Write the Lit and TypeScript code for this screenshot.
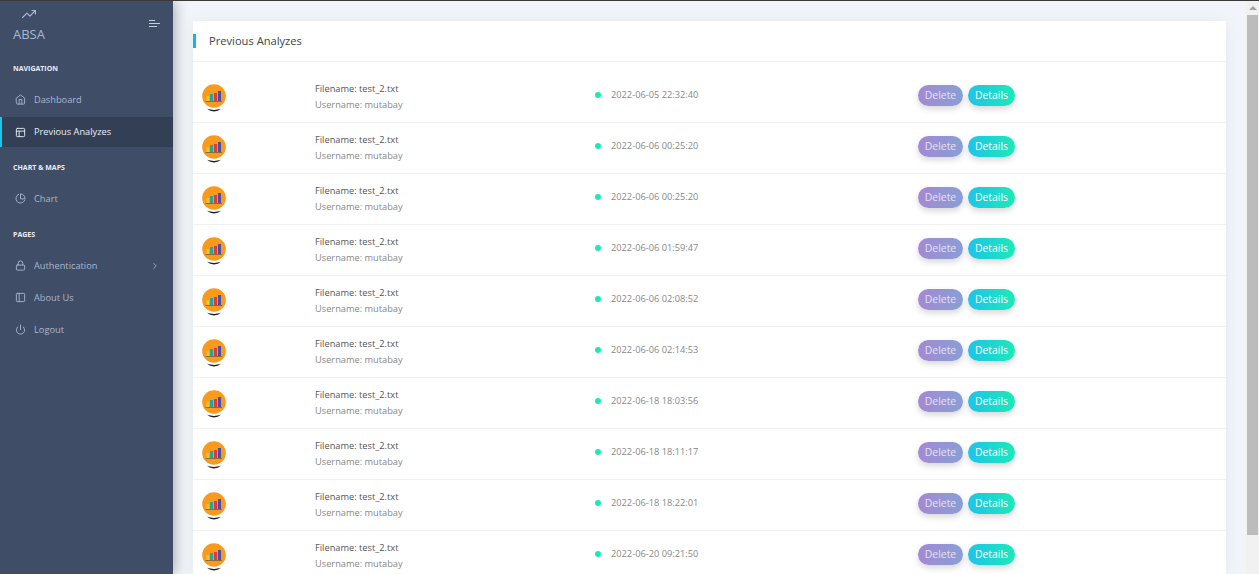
import { LitElement, html, css, svg } from 'lit';
import { customElement } from 'lit/decorators.js';

const icon = (body: unknown) => html`<svg class="ico" viewBox="0 0 24 24" fill="none" stroke="currentColor" stroke-width="2" stroke-linecap="round" stroke-linejoin="round">${body}</svg>`;

const icons = {
  home: svg`<path d="M3 9l9-7 9 7v11a2 2 0 0 1-2 2H5a2 2 0 0 1-2-2z"/><polyline points="9 22 9 12 15 12 15 22"/>`,
  layout: svg`<rect x="3" y="3" width="18" height="18" rx="2"/><line x1="3" y1="9" x2="21" y2="9"/><line x1="9" y1="21" x2="9" y2="9"/>`,
  pie: svg`<path d="M21.21 15.89A10 10 0 1 1 8 2.83"/><path d="M22 12A10 10 0 0 0 12 2v10z"/>`,
  lock: svg`<rect x="3" y="11" width="18" height="11" rx="2"/><path d="M7 11V7a5 5 0 0 1 10 0v4"/>`,
  sidebar: svg`<rect x="3" y="3" width="18" height="18" rx="2"/><line x1="9" y1="3" x2="9" y2="21"/>`,
  power: svg`<path d="M18.36 6.64a9 9 0 1 1-12.73 0"/><line x1="12" y1="2" x2="12" y2="12"/>`,
};

const dates = [
  '2022-06-05 22:32:40',
  '2022-06-06 00:25:20',
  '2022-06-06 00:25:20',
  '2022-06-06 01:59:47',
  '2022-06-06 02:08:52',
  '2022-06-06 02:14:53',
  '2022-06-18 18:03:56',
  '2022-06-18 18:11:17',
  '2022-06-18 18:22:01',
  '2022-06-20 09:21:50',
];

@customElement('app-root')
export class AppRoot extends LitElement {
  static styles = css`
    :host {
      display: flex;
      flex-direction: column;
      height: 100vh;
      overflow: hidden;
      font-family: 'Open Sans', sans-serif;
      font-size: 9.25px;
      background: #f1f5f9;
      border-top: 1px solid #3a3a3a;
      box-sizing: border-box;
    }
    .shell {
      flex: 1;
      min-height: 0;
      display: flex;
    }

    /* sidebar */
    .side {
      width: 173px;
      flex: none;
      background: #3f4d67;
      color: #a9b7d0;
      box-shadow: 2px 0 12px rgba(30, 40, 60, 0.35);
      z-index: 1;
    }
    .brand {
      height: 51px;
      display: flex;
      justify-content: space-between;
      padding: 0 13px;
      box-sizing: border-box;
    }
    .logo {
      display: flex;
      flex-direction: column;
      font-size: 13px;
      line-height: 18px;
    }
    .logo svg {
      width: 14px;
      height: 14px;
      margin: 6px 0 4px 9px;
      color: #a9b7d0;
    }
    .toggle {
      display: flex;
      flex-direction: column;
      gap: 2px;
      margin: 19px 0 0;
      width: 11px;
    }
    .toggle i {
      display: block;
      height: 1px;
      background: #c3cde0;
    }
    .toggle i:nth-child(1) { width: 6px; }
    .toggle i:nth-child(2) { width: 11px; }
    .toggle i:nth-child(3) { width: 8px; }
    .label {
      padding: 12px 13px 0;
      height: 32px;
      box-sizing: border-box;
      font-size: 7px;
      line-height: 10px;
      font-weight: 700;
      color: #e8edf7;
      text-transform: uppercase;
    }
    .item {
      display: flex;
      align-items: center;
      height: 32px;
      padding: 0 0 1px 15px;
      box-sizing: border-box;
      line-height: 14px;
      position: relative;
    }
    .item.active {
      background: #333f54;
      color: #e8edf7;
      border-left: 2px solid #1dc4e9;
      padding-left: 13px;
      padding-bottom: 0;
      height: 30px;
      margin: 1px 0;
    }
    .item .ico {
      width: 11px;
      height: 11px;
      margin-right: 8px;
    }
    .item .chev {
      width: 10px;
      height: 10px;
      margin: 0;
      position: absolute;
      right: 13px;
    }
    .gap { height: 3px; }

    /* content */
    .main {
      flex: 1;
      min-width: 0;
      padding: 20px 20px 0;
    }
    .card {
      background: #fff;
      box-shadow: 0 1px 12px rgba(69, 90, 100, 0.08);
      height: 100%;
    }
    .head {
      height: 41px;
      box-sizing: border-box;
      border-bottom: 1px solid #f1f1f1;
      display: flex;
      align-items: center;
      padding: 0 0 2px 16px;
      position: relative;
      font-size: 11.15px;
      color: #37474f;
    }
    .head::before {
      content: '';
      position: absolute;
      left: 0;
      top: 13px;
      width: 3px;
      height: 14px;
      background: #12b5f0;
    }
    .rows { padding-top: 10px; }
    .row {
      display: grid;
      grid-template-columns: 113px 280px 323px auto;
      align-items: center;
      height: 51px;
      box-sizing: border-box;
      padding-left: 9px;
      border-bottom: 1px solid #f1f1f1;
    }
    .row:last-child { border-bottom-color: transparent; }
    .avatar {
      width: 24px;
      height: 30px;
      display: block;
      margin-top: 4px;
    }
    .who {
      line-height: 16px;
      color: #555;
    }
    .who div + div { color: #888; }
    .when {
      display: flex;
      align-items: center;
      color: #888;
      margin-top: -5px;
    }
    .dot {
      width: 6px;
      height: 6px;
      border-radius: 50%;
      background: #1de9b6;
      margin: 1px 10px 0 0;
    }
    .btns {
      display: flex;
      gap: 5px;
      margin-top: -4px;
    }
    .btn {
      height: 21px;
      border-radius: 11px;
      display: flex;
      align-items: center;
      justify-content: center;
      font-size: 10.4px;
      color: #fff;
      box-shadow: 0 3px 6px rgba(0, 0, 0, 0.16);
    }
    .btn.del {
      width: 45px;
      background: linear-gradient(to right, #a389d4, #899fd4);
      color: #e6e1f3;
    }
    .btn.det {
      width: 47px;
      background: linear-gradient(to right, #1dc4e9, #1de9b6);
    }

    /* scrollbar */
    .bar {
      width: 13px;
      flex: none;
      background: #f1f1f1;
      display: flex;
      flex-direction: column;
    }
    .bar .up {
      height: 14px;
      display: flex;
      align-items: center;
      justify-content: center;
    }
    .bar .up::before {
      content: '';
      border: 4px solid transparent;
      border-top: 0;
      border-bottom: 4px solid #a3a3a3;
    }
    .bar .thumb {
      height: 520px;
      margin: 0 1px;
      background: #bcbcbc;
    }
  `;

  private item(ic: unknown, text: string, active = false, more = false) {
    return html`<div class="item ${active ? 'active' : ''}">
      ${icon(ic)}<span>${text}</span>
      ${more ? html`<svg class="ico chev" viewBox="0 0 24 24" fill="none" stroke="currentColor" stroke-width="2" stroke-linecap="round" stroke-linejoin="round"><polyline points="9 18 15 12 9 6"/></svg>` : ''}
    </div>`;
  }

  private avatar() {
    return html`<svg class="avatar" viewBox="0 0 24 30">
      <circle cx="12" cy="12" r="11.8" fill="#f99a1c"/>
      <rect x="4.5" y="12" width="2.6" height="5" fill="#f9c22e"/>
      <rect x="8" y="10" width="3" height="7" fill="#26a69a"/>
      <rect x="12" y="9" width="3" height="8" fill="#e53935"/>
      <rect x="16" y="7" width="3" height="10" fill="#4a4fa3"/>
      <rect x="3.5" y="17" width="16.5" height="1" fill="#8a6d3b"/>
      <path d="M5 24.8 Q12 27 19 24.8 Q16 27.4 12 27.4 Q8 27.4 5 24.8Z" fill="#1f1f2b"/>
    </svg>`;
  }

  render() {
    return html`
      <div class="shell">
        <nav class="side">
          <div class="brand">
            <div class="logo">
              ${icon(svg`<polyline points="23 6 13.5 15.5 8.5 10.5 1 18"/><polyline points="17 6 23 6 23 12"/>`)}
              <span>ABSA</span>
            </div>
            <div class="toggle"><i></i><i></i><i></i></div>
          </div>
          <div class="label">Navigation</div>
          ${this.item(icons.home, 'Dashboard')}
          ${this.item(icons.layout, 'Previous Analyzes', true)}
          <div class="gap"></div>
          <div class="label">Chart &amp; Maps</div>
          ${this.item(icons.pie, 'Chart')}
          <div class="gap"></div>
          <div class="label">Pages</div>
          ${this.item(icons.lock, 'Authentication', false, true)}
          ${this.item(icons.sidebar, 'About Us')}
          ${this.item(icons.power, 'Logout')}
        </nav>
        <main class="main">
          <section class="card">
            <div class="head">Previous Analyzes</div>
            <div class="rows">
              ${dates.map(
                (d) => html`<div class="row">
                  ${this.avatar()}
                  <div class="who"><div>Filename: test_2.txt</div><div>Username: mutabay</div></div>
                  <div class="when"><span class="dot"></span>${d}</div>
                  <div class="btns">
                    <div class="btn del">Delete</div>
                    <div class="btn det">Details</div>
                  </div>
                </div>`
              )}
            </div>
          </section>
        </main>
        <div class="bar"><div class="up"></div><div class="thumb"></div></div>
      </div>
    `;
  }
}
